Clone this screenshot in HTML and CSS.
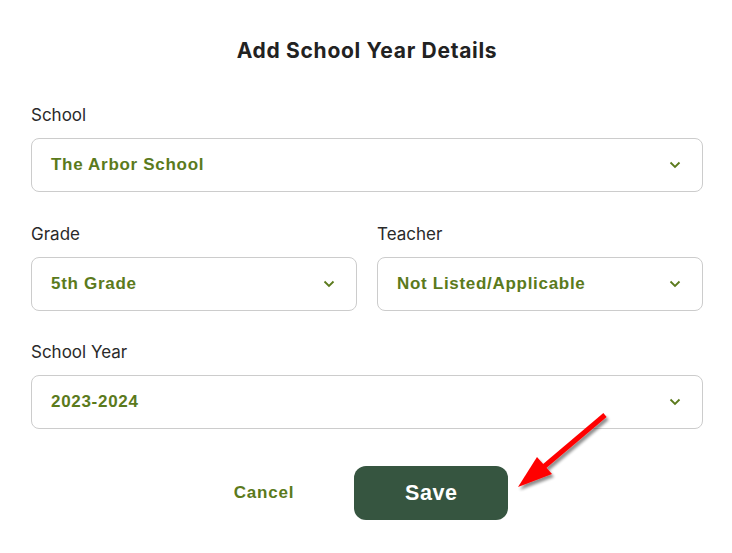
FILE: index.html
```html
<!DOCTYPE html>
<html>
<head>
<meta charset="utf-8">
<link rel="stylesheet" href="styles.css">
</head>
<body>
<div class="dialog">
  <h1 class="title">Add School Year Details</h1>
  <div class="field">
    <div class="label">School</div>
    <div class="select"><span>The Arbor School</span><svg class="chev" width="12" height="8" viewBox="0 0 12 8"><path d="M1.5 1.5 L6 6 L10.5 1.5" fill="none" stroke="#5b7a1c" stroke-width="1.8"/></svg></div>
  </div>
  <div class="row">
    <div class="field">
      <div class="label">Grade</div>
      <div class="select"><span>5th Grade</span><svg class="chev" width="12" height="8" viewBox="0 0 12 8"><path d="M1.5 1.5 L6 6 L10.5 1.5" fill="none" stroke="#5b7a1c" stroke-width="1.8"/></svg></div>
    </div>
    <div class="field">
      <div class="label">Teacher</div>
      <div class="select"><span>Not Listed/Applicable</span><svg class="chev" width="12" height="8" viewBox="0 0 12 8"><path d="M1.5 1.5 L6 6 L10.5 1.5" fill="none" stroke="#5b7a1c" stroke-width="1.8"/></svg></div>
    </div>
  </div>
  <div class="field">
    <div class="label">School Year</div>
    <div class="select"><span>2023-2024</span><svg class="chev" width="12" height="8" viewBox="0 0 12 8"><path d="M1.5 1.5 L6 6 L10.5 1.5" fill="none" stroke="#5b7a1c" stroke-width="1.8"/></svg></div>
  </div>
  <div class="actions">
    <button class="cancel">Cancel</button>
    <button class="save">Save</button>
  </div>
</div>
<svg class="arrow" width="732" height="553" viewBox="0 0 732 553">
  <defs>
    <filter id="sh" x="-20%" y="-20%" width="140%" height="140%">
      <feGaussianBlur in="SourceAlpha" stdDeviation="1.5"/>
      <feOffset dx="2" dy="3"/>
      <feComponentTransfer><feFuncA type="linear" slope="0.45"/></feComponentTransfer>
      <feMerge><feMergeNode/><feMergeNode in="SourceGraphic"/></feMerge>
    </filter>
  </defs>
  <g filter="url(#sh)">
    <line x1="605" y1="415" x2="540" y2="470" stroke="#ff0000" stroke-width="5" stroke-linecap="butt"/>
    <polygon points="518,487 537,457 552,474" fill="#ff0000"/>
  </g>
</svg>
</body>
</html>
```
FILE: styles.css
```css
* { box-sizing: border-box; }
html, body { margin: 0; padding: 0; background: #fff; }
body {
  width: 732px;
  height: 553px;
  overflow: hidden;
  font-family: Inter, "Liberation Sans", sans-serif;
  position: relative;
}
.dialog {
  padding: 39px 29px 0 31px;
}
.title {
  margin: 0 0 42px;
  text-align: center;
  font-size: 21px;
  line-height: 24px;
  font-weight: 700;
  color: #222;
  letter-spacing: 0.7px;
}
.field { margin-bottom: 32px; flex: 1; }
.row .field { margin-bottom: 31px; }
.label {
  font-size: 17px;
  line-height: 20px;
  color: #2a2a2a;
  margin-bottom: 13px;
}
.select {
  height: 54px;
  border: 1px solid #cccccc;
  border-radius: 8px;
  display: flex;
  align-items: center;
  justify-content: space-between;
  padding: 0 21px 0 19px;
}
.select span {
  font-family: "Liberation Sans", Arial, sans-serif;
  font-weight: 700;
  font-size: 17px;
  color: #5b7a1c;
  letter-spacing: 0.7px;
}
.chev { display: block; }
.row { display: flex; gap: 20px; }
.actions {
  display: flex;
  justify-content: center;
  align-items: center;
  gap: 60px;
  margin-top: 37px;
  padding-left: 8px;
}
button {
  font-family: "Liberation Sans", Arial, sans-serif;
  font-weight: 700;
  border: none;
  cursor: pointer;
}
.cancel {
  background: none;
  color: #5b7a1c;
  font-size: 17px;
  padding: 0;
  letter-spacing: 0.8px;
}
.save {
  width: 154px;
  height: 54px;
  border-radius: 12px;
  background: #365540;
  color: #fff;
  font-size: 21.5px;
  letter-spacing: 0.6px;
}
.arrow {
  position: absolute;
  left: 0;
  top: 0;
  pointer-events: none;
}
```
